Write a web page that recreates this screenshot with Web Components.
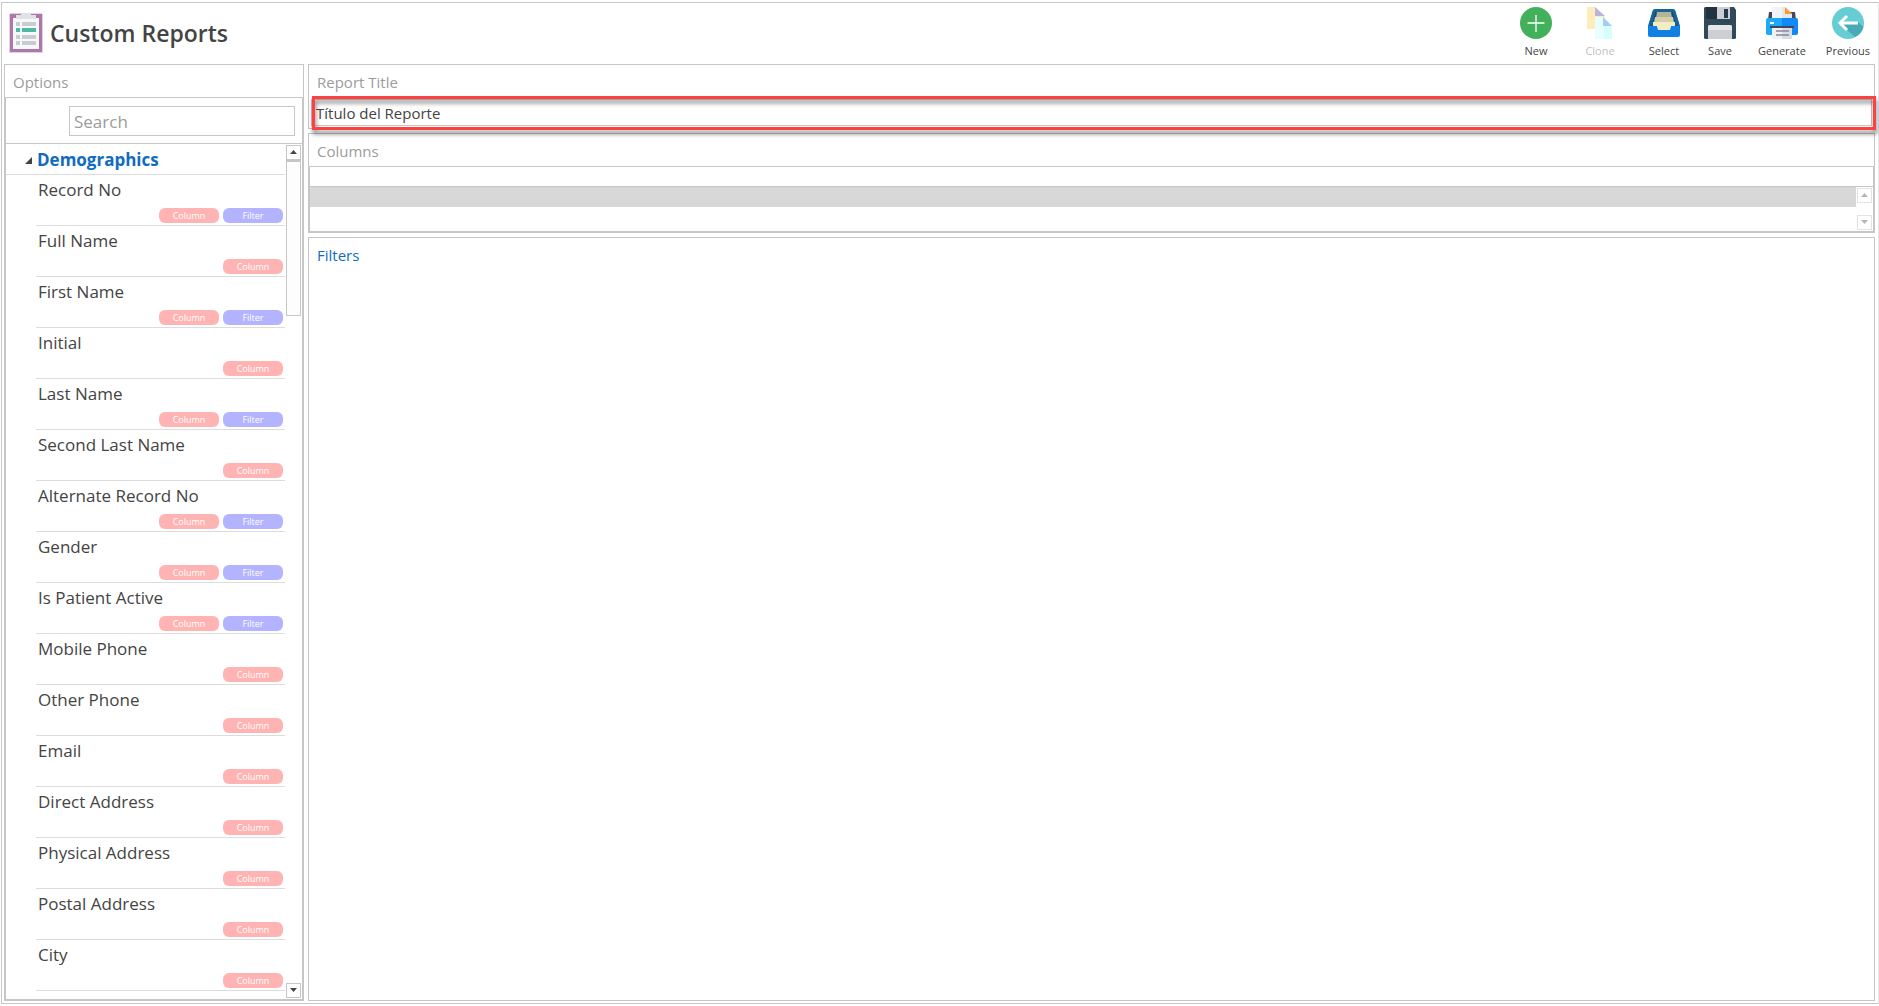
<!DOCTYPE html>
<html lang="en">
<head>
<meta charset="utf-8">
<title>Custom Reports</title>
<style>
  body {
    margin: 0;
    font-family: "Open Sans", "Noto Sans", sans-serif;
    color: #444;
    background: #fff;
  }
</style>
</head>
<body>
<report-app></report-app>

<script>
const icons = {
  clipboard: `<svg viewBox="0 0 34 40" width="34" height="40">
    <path fill="#e3cfe2" d="M1 0h32v1h1v39H0V1h1z"/><path fill="#ac78ab" d="M1 1h32v38H1z"/>
    <path fill="#f7f8f9" d="M4 5h26v31H4z"/><path fill="#dfe3e7" d="M7 2h5V0h10v2h5v4H7z"/>
    <path fill="#c9cdd2" d="M7 9h4v4H7zm6 0h14v4H13zM7 22h4v4H7zm6 0h14v4H13zM7 28h4v4H7zm6 0h14v4H13z"/>
    <path fill="#4fb9a1" d="M7 15h4v4H7zm6 0h14v4H13z"/></svg>`,
  new: `<svg viewBox="0 0 32 32" width="32" height="32"><circle cx="16" cy="16" r="16" fill="#43b05c"/>
    <path d="M16 8v17M7.500 16h17" stroke="#fff" stroke-width="1.300"/></svg>`,
  clone: `<svg viewBox="0 0 32 32" width="32" height="32"><path fill="#ffecbb" d="M3 0h8l10 9v13H3z"/>
    <path fill="#bcb3da" d="M11 0l10 9H11z"/><path fill="#e9ffff" d="M11 10h8l9 9v13H11z"/>
    <path fill="#d5fffb" d="M20 19h8v13h-8z"/><path fill="#a0cef5" d="M19 10l9 9h-9z"/></svg>`,
  select: `<svg viewBox="0 0 32 32" width="32" height="32"><path fill="#15649c" d="M7 2h18q2 0 2.500 2L32 19v3H0v-3L4.500 4Q5 2 7 2z"/>
    <path fill="#0e4e7c" d="M7 5h18l3 15H4z"/><path fill="#b8b395" d="M9 5h14l1 6H8z"/>
    <path fill="#d5ceaa" d="M7 10h18l1 6H6z"/><path fill="#f4edc3" d="M5 15h22v5h-4l-1 4H10l-1-4H5z"/>
    <path fill="#1080e2" d="M0 19h9q0 4 2 4h10q2 0 2-4h9v9q0 2-2 2H2q-2 0-2-2z"/></svg>`,
  save: `<svg viewBox="0 0 32 32" width="32" height="32"><path fill="#314a5a" d="M1 0h29l2 3v28l-1 1H1l-1-1V1z"/>
    <path fill="#20343f" d="M2 0h12v12H4q-2 0-2-2z"/><path fill="#ccd0d4" d="M13 0h13v12H13z"/>
    <path fill="#263c49" d="M20 2h4v9h-4z"/><path fill="#ccd0d3" d="M4 20q0-2 2-2h20q2 0 2 2v12H4z"/>
    <path fill="#e4e6e7" d="M4 20q0-2 2-2h20q2 0 2 2v3H4z"/></svg>`,
  generate: `<svg viewBox="0 0 32 32" width="32" height="32"><path fill="#42485c" d="M3 5h26l1 8H2z"/>
    <path fill="#e4e7ef" d="M7 0h12l7 7v4H6V1z"/><path fill="#f1f3f8" d="M7 0h9v11H6V1z"/><path fill="#ff9b22" d="M19 0l7 7h-7z"/>
    <path fill="#1aabf4" d="M0 13q0-2 2-2h14v17H2q-2 0-2-2z"/><path fill="#1487f7" d="M16 11h14q2 0 2 2v13q0 2-2 2H16z"/>
    <path fill="#fff" d="M4 15h4v2H4z"/><path fill="#42485c" d="M4 19h24v2H4z"/>
    <path fill="#eff1f6" d="M6 21h20v11H6z"/><path fill="#d9dce6" d="M16 21h10v11H16z"/>
    <path stroke="#848996" d="M10 24h13M10 28h13" stroke-width="1.500"/></svg>`,
  previous: `<svg viewBox="0 0 32 32" width="32" height="32"><circle cx="16" cy="16" r="16" fill="#66cdd5"/>
    <path fill="#49aab5" d="M8 17l6 5 9 8a16 16 0 0 0 8.500-10L26 15z"/>
    <path d="M26 16H9M15 9l-7 7 7 7" fill="none" stroke="#fff" stroke-width="3"/></svg>`
};

const arrow = up => `<svg viewBox="0 0 7 5" width="7" height="5" aria-hidden="true"><path fill="currentColor" d="${up ? 'M0 4l3.500-4L7 4z' : 'M0 0h7L3.500 4z'}"/></svg>`;

// one toolbar action: picture on top, caption below
class ToolButton extends HTMLElement {
  constructor() {
    super();
    this.attachShadow({mode: 'open'}).innerHTML = `
      <style>
        :host { display: block; }
        button {
          display: flex;
          flex-direction: column;
          align-items: center;
          gap: 4px;
          min-width: var(--tool-width, 36px);
          padding: 0;
          border: 0;
          background: none;
          color: inherit;
          font: 11px/16px "Open Sans", sans-serif;
        }
        button:disabled { color: #c0c0c0; }
      </style>
      <button type="button" ${this.hasAttribute('disabled') ? 'disabled' : ''}>
        ${icons[this.getAttribute('icon')]}
        <span><slot></slot></span>
      </button>
    `;
  }
}
customElements.define('tool-button', ToolButton);

class PageHeader extends HTMLElement {
  constructor() {
    super();
    this.attachShadow({mode: 'open'}).innerHTML = `
      <style>
        :host {
          display: flex;
          justify-content: space-between;
          align-items: flex-start;
          height: 61px;
          padding: 0 8px 0 7px;
          box-sizing: border-box;
        }
        .title { display: flex; align-items: center; gap: 7px; padding-top: 10px; }
        h1 { margin: 0; font-size: 23px; line-height: 40px; font-weight: 600; }
        svg { display: block; }
        nav { display: flex; gap: 20px; padding-top: 4px; }
      </style>
      <div class="title">${icons.clipboard}<h1><slot name="title"></slot></h1></div>
      <nav aria-label="Report actions"><slot></slot></nav>
    `;
  }
}
customElements.define('page-header', PageHeader);

// bordered box with a caption row
class UiPanel extends HTMLElement {
  constructor() {
    super();
    this.attachShadow({mode: 'open'}).innerHTML = `
      <style>
        :host {
          display: flex;
          flex-direction: column;
          box-sizing: border-box;
          min-height: 0;
          border: 1px solid #c6c6c6;
        }
        h2 {
          margin: 0;
          padding: 2px 8px 0;
          font-size: 15px;
          line-height: 30px;
          font-weight: 400;
          color: var(--caption-color, #9c9c9c);
        }
      </style>
      <h2>${this.getAttribute('caption')}</h2>
      <slot></slot>
    `;
  }
}
customElements.define('ui-panel', UiPanel);

class ScrollRail extends HTMLElement {
  constructor() {
    super();
    const thumb = this.hasAttribute('thumb') ? '<div class="thumb"></div>' : '';
    this.attachShadow({mode: 'open'}).innerHTML = `
      <style>
        :host {
          display: flex;
          flex-direction: column;
          flex: none;
          width: 15px;
          color: #444;
        }
        :host([idle]) { color: #b5b5b5; --rail: #e3e3e3; }
        button {
          display: flex;
          align-items: center;
          justify-content: center;
          height: 15px;
          padding: 0;
          border: 1px solid var(--rail, #c6c6c6);
          background: #fff;
          color: inherit;
        }
        .track { flex: 1; }
        .thumb {
          box-sizing: border-box;
          height: 19%;
          min-height: 20px;
          border: 1px solid #c6c6c6;
          border-top-width: 2px;
          background: #fdfdfd;
        }
      </style>
      <button type="button" aria-label="Scroll up">${arrow(true)}</button>
      <div class="track">${thumb}</div>
      <button type="button" aria-label="Scroll down">${arrow(false)}</button>
    `;
  }
}
customElements.define('scroll-rail', ScrollRail);

class OptionItem extends HTMLElement {
  constructor() {
    super();
    const filter = this.hasAttribute('filter') ? '<button type="button" class="filter">Filter</button>' : '';
    this.attachShadow({mode: 'open'}).innerHTML = `
      <style>
        :host {
          display: block;
          box-sizing: border-box;
          height: 51px;
          margin-left: 30px;
          padding: 3px 2px 0;
          border-bottom: 1px solid #dcdcdc;
        }
        .name { font-size: 17px; line-height: 24px; }
        .tags { display: flex; justify-content: flex-end; gap: 4px; margin-top: 6px; }
        button {
          width: 60px;
          height: 15px;
          padding: 0;
          border: 0;
          border-radius: 6px;
          background: #ffb3b3;
          color: #fff;
          font: 9px/15px "Open Sans", sans-serif;
        }
        .filter { background: #b3b3ff; }
      </style>
      <div class="name"><slot></slot></div>
      <div class="tags"><button type="button">Column</button>${filter}</div>
    `;
  }
}
customElements.define('option-item', OptionItem);

class OptionTree extends HTMLElement {
  constructor() {
    super();
    this.attachShadow({mode: 'open'}).innerHTML = `
      <style>
        :host {
          display: flex;
          flex-direction: column;
          flex: 1;
          min-height: 0;
          border: 1px solid #c6c6c6;
        }
        .search {
          flex: none;
          display: flex;
          justify-content: flex-end;
          padding: 8px 7px 7px;
          border-bottom: 1px solid #c6c6c6;
        }
        input {
          box-sizing: border-box;
          width: 226px;
          height: 30px;
          padding: 0 4px;
          border: 1px solid #c6c6c6;
          font: 17px "Open Sans", sans-serif;
          color: inherit;
        }
        input::placeholder { color: #9c9c9c; opacity: 1; }
        .body { display: flex; flex: 1; min-height: 0; }
        .list { flex: 1; overflow: hidden; }
        .group {
          display: flex;
          align-items: center;
          gap: 5px;
          width: 100%;
          height: 31px;
          padding: 2px 0 0 19px;
          border: 0;
          border-bottom: 1px solid #dcdcdc;
          background: none;
          color: #0f6cbf;
          font: 700 17px/24px "Open Sans", sans-serif;
        }
        scroll-rail { margin: 1px; }
      </style>
      <div class="search"><input type="search" placeholder="Search" aria-label="Search"></div>
      <div class="body">
        <div class="list">
          <button type="button" class="group" aria-expanded="true">
            <svg viewBox="0 0 7 7" width="7" height="7" aria-hidden="true"><path fill="#444" d="M7 0v7H0z"/></svg>
            ${this.getAttribute('group')}
          </button>
          <slot></slot>
        </div>
        <scroll-rail thumb></scroll-rail>
      </div>
    `;
  }
}
customElements.define('option-tree', OptionTree);

class TitleField extends HTMLElement {
  constructor() {
    super();
    this.attachShadow({mode: 'open'}).innerHTML = `
      <style>
        :host { display: block; position: relative; padding: 2px; }
        input {
          display: block;
          box-sizing: border-box;
          width: 100%;
          height: 27px;
          padding: 0 4px;
          border: 1px solid #c6c6c6;
          font: 15px "Open Sans", sans-serif;
          color: inherit;
        }
        /* red frame lies over the field and the panel's edge */
        .mark {
          position: absolute;
          inset: -1px -2px -2px 3px;
          border: 3px solid #ff4040;
          filter: drop-shadow(1px 4px 2px rgba(0, 0, 0, .5));
          pointer-events: none;
        }
      </style>
      <input type="text" value="${this.getAttribute('value')}" aria-label="Report Title">
      <div class="mark"></div>
    `;
  }
}
customElements.define('title-field', TitleField);

class ColumnGrid extends HTMLElement {
  constructor() {
    super();
    this.attachShadow({mode: 'open'}).innerHTML = `
      <style>
        :host { display: block; border: 1px solid #c6c6c6; }
        .head { height: 19px; border-bottom: 1px solid #c6c6c6; }
        .body { display: flex; height: 44px; }
        .rows { flex: 1; }
        .row { height: 20px; background: #d8d8d8; }
        scroll-rail { margin: 1px; }
      </style>
      <div class="head"></div>
      <div class="body">
        <div class="rows"><div class="row"></div></div>
        <scroll-rail idle></scroll-rail>
      </div>
    `;
  }
}
customElements.define('column-grid', ColumnGrid);

const options = [
  ['Record No', true], ['Full Name'], ['First Name', true], ['Initial'],
  ['Last Name', true], ['Second Last Name'], ['Alternate Record No', true],
  ['Gender', true], ['Is Patient Active', true], ['Mobile Phone'],
  ['Other Phone'], ['Email'], ['Direct Address'], ['Physical Address'],
  ['Postal Address'], ['City']
];

class ReportApp extends HTMLElement {
  constructor() {
    super();
    this.attachShadow({mode: 'open'}).innerHTML = `
      <style>
        :host {
          display: block;
          box-sizing: border-box;
          height: 100vh;
          padding: 2px 0 2px 1px;
        }
        .frame {
          display: flex;
          flex-direction: column;
          box-sizing: border-box;
          height: 100%;
          border: 1px solid #c6c6c6;
          border-right-color: #e6e6e6;
        }
        main {
          display: grid;
          grid-template-columns: 300px 1fr;
          gap: 4px;
          flex: 1;
          min-height: 0;
          padding: 0 3px 2px 2px;
        }
        .work { display: flex; flex-direction: column; gap: 4px; min-width: 0; min-height: 0; }
        .filters { flex: 1; --caption-color: #0f6cbf; }
      </style>
      <div class="frame">
        <page-header>
          <span slot="title">Custom Reports</span>
          <tool-button icon="new">New</tool-button>
          <tool-button icon="clone" disabled style="--tool-width: 52px">Clone</tool-button>
          <tool-button icon="select">Select</tool-button>
          <tool-button icon="save">Save</tool-button>
          <tool-button icon="generate">Generate</tool-button>
          <tool-button icon="previous">Previous</tool-button>
        </page-header>
        <main>
          <ui-panel caption="Options">
            <option-tree group="Demographics">
              ${options.map(([name, filter]) => `<option-item ${filter ? 'filter' : ''}>${name}</option-item>`).join('')}
            </option-tree>
          </ui-panel>
          <div class="work">
            <ui-panel caption="Report Title"><title-field value="Título del Reporte"></title-field></ui-panel>
            <ui-panel caption="Columns"><column-grid></column-grid></ui-panel>
            <ui-panel caption="Filters" class="filters"></ui-panel>
          </div>
        </main>
      </div>
    `;
  }
}
customElements.define('report-app', ReportApp);
</script>
</body>
</html>
